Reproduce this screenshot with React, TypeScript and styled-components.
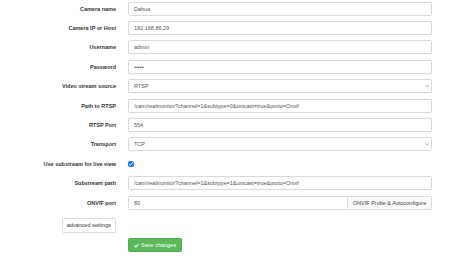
import React from 'react';
import styled, { createGlobalStyle } from 'styled-components';

const GlobalStyle = createGlobalStyle`
  html, body {
    margin: 0;
    padding: 0;
    background: #ffffff;
  }

  body {
    font-family: "Liberation Sans", Arial, Helvetica, sans-serif;
    color: #333333;
  }
`;

const Form = styled.form`
  display: flex;
  flex-direction: column;
  padding-top: 1.7px;
  width: 474px;
`;

const FormRow = styled.div<{ $gapAfter?: number }>`
  display: grid;
  grid-template-columns: 116px 304px;
  column-gap: 12px;
  align-items: center;
  height: 14px;
  margin-bottom: ${(p) => (p.$gapAfter !== undefined ? p.$gapAfter : 5.4)}px;
`;

const Label = styled.label`
  text-align: right;
  font-size: 5.5px;
  font-weight: bold;
  color: #333333;
  white-space: nowrap;
`;

const TextInput = styled.input`
  display: block;
  box-sizing: border-box;
  width: 100%;
  height: 14px;
  margin: 0;
  padding: 0 5px;
  border: 1px solid #d9d9d9;
  border-radius: 1.5px;
  background: #ffffff;
  font-family: inherit;
  font-size: 5.5px;
  color: #555555;
  outline: none;
`;

const SelectWrap = styled.div`
  position: relative;
  width: 100%;
  height: 14px;
`;

const Select = styled.select`
  display: block;
  box-sizing: border-box;
  width: 100%;
  height: 14px;
  margin: 0;
  padding: 0 5px;
  border: 1px solid #d9d9d9;
  border-radius: 1.5px;
  background: #ffffff;
  font-family: inherit;
  font-size: 5.5px;
  color: #555555;
  appearance: none;
  -webkit-appearance: none;
  outline: none;
`;

const Chevron = styled.svg`
  position: absolute;
  right: 3px;
  top: 5px;
  width: 4px;
  height: 4px;
  pointer-events: none;
`;

const CheckCell = styled.div`
  display: flex;
  align-items: center;
  height: 14px;
`;

const Check = styled.input`
  display: block;
  width: 5.5px;
  height: 5.5px;
  margin: 0;
  accent-color: #1a73e8;
`;

const InputGroup = styled.div`
  display: flex;
  width: 100%;
  height: 14px;
`;

const GroupInput = styled(TextInput)`
  flex: 1;
  border-radius: 1.5px 0 0 1.5px;
`;

const Addon = styled.button`
  box-sizing: border-box;
  height: 14px;
  width: 84px;
  margin: 0;
  padding: 0 3px;
  border: 1px solid #d9d9d9;
  border-left: none;
  border-radius: 0 1.5px 1.5px 0;
  background: #fafafa;
  font-family: inherit;
  font-size: 5.5px;
  color: #444444;
  white-space: nowrap;
`;

const ActionCell = styled.div<{ $align: 'start' | 'end' }>`
  display: flex;
  justify-content: ${(p) => (p.$align === 'end' ? 'flex-end' : 'flex-start')};
`;

const PlainButton = styled.button`
  box-sizing: border-box;
  height: 14.4px;
  width: 54.4px;
  margin: 0;
  padding: 0;
  border: 1px solid #dcdcdc;
  border-radius: 1.5px;
  background: #ffffff;
  font-family: inherit;
  font-size: 5.5px;
  color: #333333;
  white-space: nowrap;
`;

const SaveButton = styled.button`
  box-sizing: border-box;
  display: flex;
  align-items: center;
  justify-content: center;
  gap: 2px;
  height: 13.4px;
  width: 54px;
  margin: 0;
  padding: 0;
  border: 1px solid #4cae4c;
  border-radius: 1.5px;
  background: #5cb85c;
  font-family: inherit;
  font-size: 5.5px;
  color: #ffffff;
  white-space: nowrap;
`;

const fields: { label: string; value: string }[] = [
  { label: 'Camera name', value: 'Dahua' },
  { label: 'Camera IP or Host', value: '192.168.86.29' },
  { label: 'Username', value: 'admin' },
];

const ChevronIcon = () => (
  <Chevron viewBox="0 0 10 10">
    <path d="M1.5 3.5 L5 7 L8.5 3.5" fill="none" stroke="#666" strokeWidth="1.6" />
  </Chevron>
);

const App: React.FC = () => (
  <>
    <GlobalStyle />
    <Form onSubmit={(e) => e.preventDefault()}>
      {fields.map((f) => (
        <FormRow key={f.label}>
          <Label>{f.label}</Label>
          <TextInput defaultValue={f.value} />
        </FormRow>
      ))}
      <FormRow>
        <Label>Password</Label>
        <TextInput type="password" defaultValue="admin" />
      </FormRow>
      <FormRow>
        <Label>Video stream source</Label>
        <SelectWrap>
          <Select defaultValue="RTSP">
            <option>RTSP</option>
          </Select>
          <ChevronIcon />
        </SelectWrap>
      </FormRow>
      <FormRow>
        <Label>Path to RTSP</Label>
        <TextInput defaultValue="/cam/realmonitor?channel=1&subtype=0&unicast=true&proto=Onvif" />
      </FormRow>
      <FormRow>
        <Label>RTSP Port</Label>
        <TextInput defaultValue="554" />
      </FormRow>
      <FormRow>
        <Label>Transport</Label>
        <SelectWrap>
          <Select defaultValue="TCP">
            <option>TCP</option>
          </Select>
          <ChevronIcon />
        </SelectWrap>
      </FormRow>
      <FormRow>
        <Label>Use substream for live view</Label>
        <CheckCell>
          <Check type="checkbox" defaultChecked />
        </CheckCell>
      </FormRow>
      <FormRow>
        <Label>Substream path</Label>
        <TextInput defaultValue="/cam/realmonitor?channel=1&subtype=1&unicast=true&proto=Onvif" />
      </FormRow>
      <FormRow $gapAfter={8.6}>
        <Label>ONVIF port</Label>
        <InputGroup>
          <GroupInput defaultValue="80" />
          <Addon type="button">ONVIF Probe &amp; Autoconfigure</Addon>
        </InputGroup>
      </FormRow>
      <FormRow $gapAfter={6}>
        <ActionCell $align="end">
          <PlainButton type="button">advanced settings</PlainButton>
        </ActionCell>
        <div />
      </FormRow>
      <FormRow>
        <div />
        <ActionCell $align="start">
          <SaveButton type="submit">
            <svg width="5" height="5" viewBox="0 0 10 10">
              <path d="M1 5.2 L4 8 L9 2" fill="none" stroke="#fff" strokeWidth="2.2" />
            </svg>
            Save changes
          </SaveButton>
        </ActionCell>
      </FormRow>
    </Form>
  </>
);

export default App;
